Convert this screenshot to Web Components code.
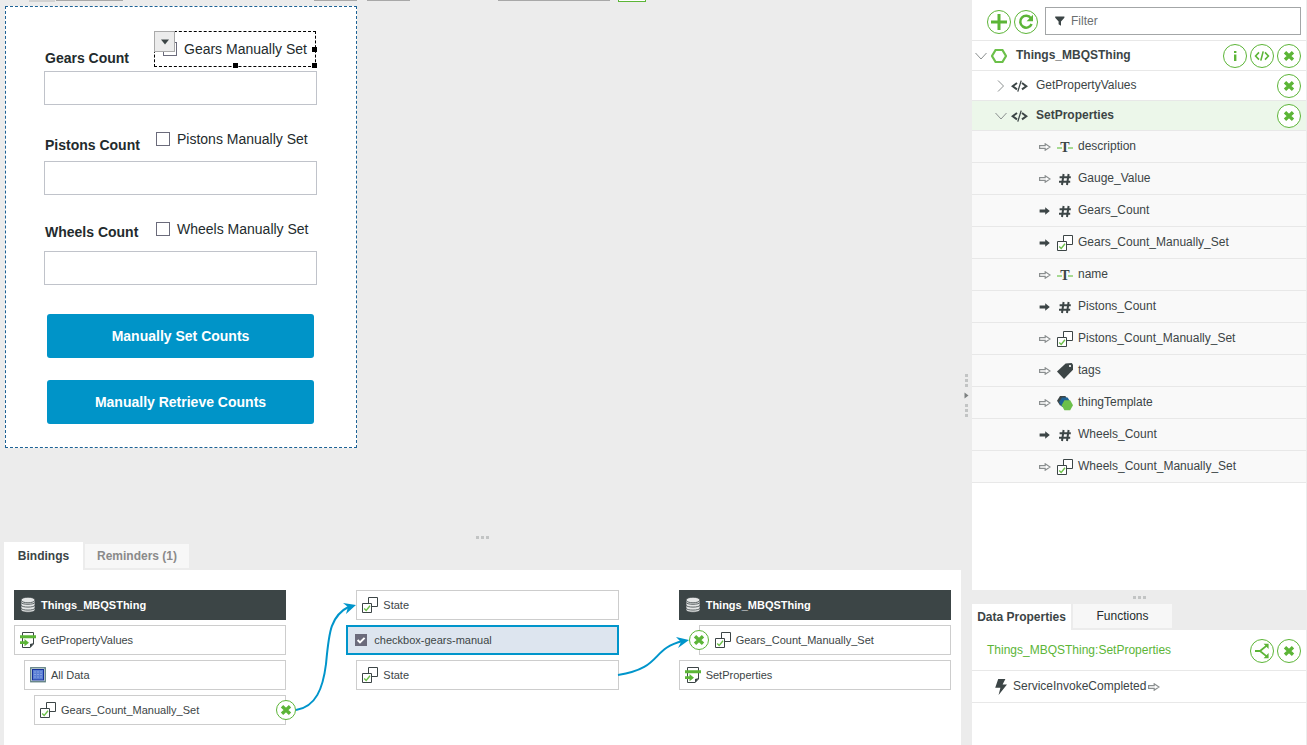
<!DOCTYPE html>
<html lang="en">
<head>
<meta charset="utf-8">
<title>Mashup Builder</title>
<style>
  html, body { margin: 0; background: #ececec; }
  body { font: 12px/16px "Liberation Sans", Arial, sans-serif; color: #3c4546; }
</style>
</head>
<body>
<builder-shell></builder-shell>

<script>
const G = '#5cb537', D = '#3c4546', B = '#0095cb';
const ICONS = {
  plus: [16, 16, `<path d="M8 0v16M0 8h16" stroke="${G}" stroke-width="3"/>`],
  refresh: [16, 16, `<path d="M12.9 4.2A5.9 5.9 0 1 0 13.6 10" fill="none" stroke="${G}" stroke-width="2.5"/><path d="M15 .8v6.4H8.6z" fill="${G}"/>`],
  close: [12, 12, `<path d="M2 2.200l8 7.600M10 2.200L2 9.800" stroke="${G}" stroke-width="3.400"/>`],
  info: [10, 12, `<path d="M4 1h2.400v2H4zM4 4.500h2.400v6.500H4z" fill="${G}"/>`],
  codegreen: [16, 12, `<path d="M5 2.400L1.600 6 5 9.600M11 2.400L14.400 6 11 9.600M9.200 1.400L6.800 10.600" fill="none" stroke="${G}" stroke-width="1.600"/>`],
  code: [17, 12, `<path d="M6 3L1.600 6.200 6 9.400M11 3l4.400 3.200L11 9.400" fill="none" stroke="${D}" stroke-width="2"/><path d="M10.200 .6L6.800 11.600" stroke="${D}" stroke-width="1.300"/>`],
  branch: [16, 16, `<path d="M1 8h5L13 2.400M6 8l7 5.600" fill="none" stroke="${G}" stroke-width="1.800"/><path d="M9.600.8H14.600V6zM9.600 15.200H14.600V10z" fill="${G}"/>`],
  funnel: [10, 10, `<path d="M.2.6h9.200v1.200L6 5.400v4.400L3.600 8.200V5.400L.2 1.800z" fill="${D}"/>`],
  hexagon: [16, 14, `<path d="M4.600 1h6.800L15 7l-3.600 6H4.600L1 7z" fill="none" stroke="#6cc04a" stroke-width="2.200"/>`],
  down: [12, 10, `<path d="M.5 2l5.500 6 5.500-6" fill="none" stroke="#8a8f8f"/>`],
  right: [12, 12, `<path d="M3 .5l5.500 5.500L3 11.500" fill="none" stroke="#8a8f8f"/>`],
  hollow: [12, 8, `<path d="M.6 2.600h5.600V.8L11 4 6.200 7.200V5.400H.6z" fill="#fff" stroke="#8a8e8f" stroke-width="1.200"/>`],
  solid: [12, 8, `<path d="M.6 2.500h5.600V.3L10.800 4 6.200 7.700V5.500H.6z" fill="${D}"/>`],
  string: [16, 16, `<path d="M0 9h5M11 9h5" stroke="#8cd070" stroke-width="1.500"/><text x="8" y="13" text-anchor="middle" font-family="Liberation Serif, serif" font-weight="700" font-size="14" fill="${D}">T</text>`],
  number: [16, 16, `<path d="M6.600 3L5 14M11.600 3L10 14M2.600 6.200h11.200M2 10.800h11.200" stroke="${D}" stroke-width="2"/>`],
  bool: [16, 16, `<path d="M6.500.5h9v9h-9z" fill="#fff" stroke="${D}"/><path d="M.5 6.500h9v9h-9z" fill="#fff" stroke="${D}"/><path d="M2.200 11.400l2 2L8 8.800" fill="none" stroke="#6cc04a" stroke-width="1.400"/>`],
  tag: [16, 16, `<path d="M8.600.6L14.600 0 16 1.400V6.800L7 16 0 8.600z" fill="${D}"/><circle cx="13" cy="3" r="1.100" fill="#fff"/>`],
  template: [16, 16, `<path d="M3 1h5.400l3 4.800-3 4.800H3L0 5.800z" fill="${D}"/><path d="M5 2.500h5.600l3 4.800-3 4.800H5L2 7.300z" fill="#1d6295"/><path d="M7.400 5.200h5.800l2.800 5-2.800 5H7.400l-2.800-5z" fill="#6cc04a"/>`],
  database: [16, 16, `<g fill="#e4e6e6" stroke="${D}" stroke-width=".8"><path d="M1 11v2c0 3 14 3 14 0v-2z"/><path d="M1 8v3c0 2.800 14 2.800 14 0V8z"/><path d="M1 5v3c0 2.800 14 2.800 14 0V5z"/><path d="M1 3v2.200c0 2.800 14 2.800 14 0V3z"/><ellipse cx="8" cy="3" rx="7" ry="2.800"/></g>`],
  service: [16, 16, `<path d="M2.500 5V.5h11V5M2.500 5v10.500h7.500l3.500-3.500V5z" fill="#fff" stroke="${D}"/><path d="M14 11l-4 5v-4z" fill="${D}"/><path d="M0 3.200h16v3H0zM0 9.200h4.500V7l4.500 3.700-4.500 3.600v-2.200H0z" fill="${G}"/>`],
  infotable: [16, 16, `<rect x=".75" y=".75" width="14.500" height="14" fill="#e4eeee" stroke="#5d7d80" stroke-width="1.300"/><rect x="2.500" y="2.500" width="11" height="10.500" fill="#5a7fd4" stroke="#16309c"/><path d="M4 5h8M4 7.500h8M4 10h8" stroke="#8da6e2" stroke-width=".9" stroke-dasharray="2 1"/>`],
  bolt: [12, 16, `<path d="M3.200 0h7.200L7.600 5.400H12L3.600 16l1.800-7.200H.2z" fill="${D}"/>`],
  caret: [10, 6, `<path d="M1 .5h8L5 5.500z" fill="${D}"/>`],
  grip: [5, 7, `<path d="M.5.500v6L4.500 3.500z" fill="#7c8080"/>`]
};

function define(name, css, html, setup) {
  customElements.define(name, class extends HTMLElement {
    constructor() {
      super();
      this.attachShadow({ mode: 'open' });
    }
    connectedCallback() {
      const markup = typeof html === 'function' ? html(this) : html;
      this.shadowRoot.innerHTML = `<style>*{box-sizing:border-box}${css}</style>${markup}`;
      if (setup) setup(this);
    }
  });
}

define('ui-icon', `:host{display:block;flex:none} svg{display:block}`, el => {
  const [w, h, body] = ICONS[el.getAttribute('name')];
  return `<svg width="${w}" height="${h}" viewBox="0 0 ${w} ${h}" aria-hidden="true">${body}</svg>`;
});

define('round-button', `
  :host{display:block;flex:none}
  button{display:flex;align-items:center;justify-content:center;width:var(--size,24px);height:var(--size,24px);
    padding:0;border:1px solid #5cb537;border-radius:50%;background:#fff;cursor:pointer}`,
  el => `<button type="button" aria-label="${el.getAttribute('label')}"><ui-icon name="${el.getAttribute('icon')}"></ui-icon></button>`);

define('dot-grip', `
  :host{display:flex;align-items:center;justify-content:center;gap:2px}
  :host([vertical]){flex-direction:column}
  i{width:3px;height:3px;background:#c2c4c4}`, `<i></i><i></i><i></i>`);

define('toolbar-edge', `
  :host{display:flex;align-items:flex-start;height:6px}
  i{height:1px;background:#a8a8a8}
  .tab{width:26px;height:2px;margin:0 1px 0 29px;background:#d2d2d2}
  .a{width:67px;margin-right:191px}.b{width:43px;margin-right:10px}.c{width:43px;margin-right:88px}
  .d{width:112px;margin-right:8px}
  .e{width:28px;height:2px;background:#fff;border:1px solid #5cb537;border-top:0}`,
  `<i class="tab"></i><i class="a"></i><i class="b"></i><i class="c"></i><i class="d"></i><i class="e"></i>`);

define('count-field', `
  :host{display:block}
  header{display:grid;grid-template-columns:109px 162px;height:36px;margin-bottom:4px}
  .name{align-self:end;margin-bottom:var(--rise,0);font:700 14px/18px "Liberation Sans",Arial,sans-serif;color:#232b2d}
  .check{position:relative;display:flex;align-items:center;gap:7px;padding-left:2px;font-size:14px;line-height:18px;
    color:#232b2d;white-space:nowrap}
  :host([selected]) .check{padding-left:8px;border:1px dashed #000}
  input[type=checkbox]{appearance:none;flex:none;width:14px;height:14px;margin:0;border:1px solid #6b6b7b;background:#fff}
  input[type=text]{display:block;width:273px;height:34px;margin:0 0 0 -1px;padding:0 8px;border:1px solid #c0c3ca;
    background:#fff;font:14px/18px "Liberation Sans",Arial,sans-serif;outline:0}
  .menu{position:absolute;left:-1px;top:-1px;display:flex;align-items:center;justify-content:center;width:21px;height:21px;
    padding:0;border:1px solid #aaa;background:#ececec}
  .handle{position:absolute;width:5px;height:5px;background:#000}
  .e{right:-2px;top:15px}.s{left:78px;bottom:-2px}.se{right:-2px;bottom:-2px}`,
  el => {
    const n = el.getAttribute('name');
    const tools = el.hasAttribute('selected')
      ? `<button type="button" class="menu" aria-label="Widget menu"><ui-icon name="caret"></ui-icon></button>
         <span class="handle e"></span><span class="handle s"></span><span class="handle se"></span>` : '';
    return `<header><label class="name" for="value">${n} Count</label>
      <div class="check"><input type="checkbox" id="manual"><label for="manual">${n} Manually Set</label>${tools}</div></header>
      <input type="text" id="value">`;
  });

define('action-button', `
  :host{display:block}
  button{display:block;width:100%;height:44px;padding:0;border:0;border-radius:3px;background:#0094c8;color:#fff;
    font:700 14px/18px "Liberation Sans",Arial,sans-serif;cursor:pointer}`,
  `<button type="button"><slot></slot></button>`);

define('mashup-canvas', `
  :host{display:block;width:352px;margin-left:5px;padding:24px 38px 23px;border:1px dashed #1d6295;background:#fff}
  .fields{display:flex;flex-direction:column;gap:16px;padding-left:1px}
  .actions{display:flex;flex-direction:column;gap:22px;width:267px;margin:29px 0 0 3px}
  .mid{--rise:3px}.high{--rise:6px}`,
  `<div class="fields">
    <count-field name="Gears" selected></count-field>
    <count-field name="Pistons" class="mid"></count-field>
    <count-field name="Wheels" class="high"></count-field>
  </div>
  <div class="actions">
    <action-button>Manually Set Counts</action-button>
    <action-button>Manually Retrieve Counts</action-button>
  </div>`);

define('tab-strip', `
  :host{display:flex;align-items:center;gap:2px}
  button{height:24px;padding:0;border:0;background:#f7f7f7;color:var(--idle,#232b2d);
    font:var(--idle-weight,400) 12px/16px "Liberation Sans",Arial,sans-serif;white-space:nowrap}
  .one{width:var(--first);height:var(--tab-height,28px);background:#fff;color:#3c4546;font-weight:700}
  .two{width:var(--second)}`,
  el => `<button type="button" role="tab" class="one" aria-selected="true">${el.getAttribute('first')}</button><button type="button" role="tab" class="two" aria-selected="false">${el.getAttribute('second')}</button>`);

define('binding-row', `
  :host{display:flex;align-items:center;gap:5px;position:relative;box-sizing:border-box;height:30px;padding:0 5px;
    border:1px solid #cdcdcd;background:#fff;font-size:11px;line-height:14px;white-space:nowrap}
  :host([kind=source]){border-color:#3c4546;background:#3c4546;color:#fff;font-weight:700}
  :host([kind=widget]){gap:7px;padding:0 7px;border:2px solid #0095cb;background:#dde5ef}
  :host([indent="1"]){margin-left:10px}
  :host([indent="2"]){margin-left:20px}
  :host([unlink=start]){padding-left:15px}
  round-button{--size:20px;position:absolute;top:4px}
  :host([unlink=start]) round-button{left:-11px}
  :host([unlink=end]) round-button{right:-11px}
  input{appearance:none;width:12px;height:12px;margin:0;background:#6b6b7b}
  .tick{display:grid;width:12px;height:12px}
  .tick>*{grid-area:1/1}
  .tick svg{pointer-events:none;z-index:1}`,
  el => {
    const lead = el.getAttribute('kind') === 'widget'
      ? `<span class="tick"><input type="checkbox" id="on" checked aria-label="Widget"><svg width="12" height="12" viewBox="0 0 12 12"><path d="M2.600 6l2.400 2.400L9.600 3.900" fill="none" stroke="#fff" stroke-width="2"/></svg></span>`
      : `<ui-icon name="${el.getAttribute('icon')}"></ui-icon>`;
    const x = el.hasAttribute('unlink') ? `<round-button icon="close" label="Remove binding"></round-button>` : '';
    return `${lead}<span><slot></slot></span>${x}`;
  });

define('binding-board', `
  :host{display:grid;grid-template-columns:repeat(3,minmax(0,1fr));gap:60px;box-sizing:border-box;min-height:175px;padding:20px 10px;background:#fff}
  section{display:flex;flex-direction:column;gap:5px;position:relative}
  .wire{position:absolute;pointer-events:none;overflow:visible;z-index:1}
  .in{left:-50px;top:0}
  .out{left:100%;top:0}
  path{fill:none;stroke:#0095cb;stroke-width:2}
  .tip{fill:#0095cb;stroke:none}`,
  `<section>
    <binding-row kind="source" icon="database">Things_MBQSThing</binding-row>
    <binding-row icon="service">GetPropertyValues</binding-row>
    <binding-row icon="infotable" indent="1">All Data</binding-row>
    <binding-row icon="bool" indent="2" unlink="end">Gears_Count_Manually_Set</binding-row>
  </section>
  <section>
    <svg class="wire in" width="60" height="125" viewBox="0 0 60 125"><path d="M0 120C20 117 27 98 30 74C33 42 34 26 54 16"/><path class="tip" d="M60 15L50 24L52 17L47 13z"/></svg>
    <binding-row icon="bool" indent="1">State</binding-row>
    <binding-row kind="widget">checkbox-gears-manual</binding-row>
    <binding-row icon="bool" indent="1">State</binding-row>
    <svg class="wire out" width="70" height="125" viewBox="0 0 70 125"><path d="M-1 85C44 78 31 59 64 51"/><path class="tip" d="M70 50L59 58L62 52L57 47z"/></svg>
  </section>
  <section>
    <binding-row kind="source" icon="database">Things_MBQSThing</binding-row>
    <binding-row icon="bool" indent="2" unlink="start">Gears_Count_Manually_Set</binding-row>
    <binding-row icon="service">SetProperties</binding-row>
  </section>`);

define('filter-bar', `
  :host{display:flex;align-items:center;gap:3px;box-sizing:border-box;height:41px;padding:1px 5px 0 15px;border-bottom:1px solid #e8e8e8;background:#fff}
  round-button{padding-top:2px}
  label{display:flex;align-items:center;gap:6px;flex:1;min-width:0;height:28px;margin-left:4px;padding-left:9px;border:1px solid #a3a6a7}
  input{flex:1;min-width:0;padding:0;border:0;outline:0;background:none;font:12px/16px "Liberation Sans",Arial,sans-serif}
  input::placeholder{color:#6a6f70;opacity:1}`,
  `<round-button icon="plus" label="Add entity"></round-button><round-button icon="refresh" label="Refresh"></round-button>
   <label><ui-icon name="funnel"></ui-icon><input type="text" placeholder="Filter" aria-label="Filter"></label>`);

define('tree-row', `
  :host{display:flex;align-items:center;box-sizing:border-box;height:30px;padding:0 5px 0 3px;border-bottom:1px solid #e8e8e8;white-space:nowrap}
  .text{flex:1;padding-bottom:1px}
  :host([bold]) .text{font-weight:700}
  .actions{display:flex;gap:3px;padding-top:1px}
  :host([level="0"]) .text{padding-left:9px}
  :host([level="0"]) .kind{margin-left:4px}
  :host([level="1"]){padding-left:23px}
  :host([level="1"]) .kind{margin-left:4px}
  :host([level="1"]) .text{padding-left:8px}
  :host([active]){background:#ecf7ea}
  :host([level="2"]){height:32px;padding-left:67px;background:#f9f9f9}
  :host([level="2"]) .kind{margin-left:6px}
  :host([level="2"]) .text{padding-left:5px}`,
  el => {
    const acts = (el.getAttribute('actions') || '').split(' ').filter(Boolean)
      .map(a => `<round-button icon="${a}" label="${a}"></round-button>`).join('');
    return `<ui-icon name="${el.getAttribute('lead')}"></ui-icon><ui-icon class="kind" name="${el.getAttribute('kind')}"></ui-icon>
      <span class="text"><slot></slot></span><span class="actions">${acts}</span>`;
  });

define('data-tree', `:host{display:block;background:#fff}`, () => {
  const leaves = [
    ['hollow', 'string', 'description'], ['hollow', 'number', 'Gauge_Value'], ['solid', 'number', 'Gears_Count'],
    ['solid', 'bool', 'Gears_Count_Manually_Set'], ['hollow', 'string', 'name'], ['solid', 'number', 'Pistons_Count'],
    ['hollow', 'bool', 'Pistons_Count_Manually_Set'], ['hollow', 'tag', 'tags'], ['hollow', 'template', 'thingTemplate'],
    ['solid', 'number', 'Wheels_Count'], ['hollow', 'bool', 'Wheels_Count_Manually_Set']
  ];
  return `<tree-row level="0" bold lead="down" kind="hexagon" actions="info codegreen close">Things_MBQSThing</tree-row>
    <tree-row level="1" lead="right" kind="code" actions="close">GetPropertyValues</tree-row>
    <tree-row level="1" bold active lead="down" kind="code" actions="close">SetProperties</tree-row>` +
    leaves.map(([a, k, t]) => `<tree-row level="2" lead="${a}" kind="${k}">${t}</tree-row>`).join('');
});

define('service-events', `
  :host{display:block;box-sizing:border-box;min-height:115px;background:#fff}
  .head{display:flex;align-items:center;gap:3px;height:41px;padding:0 5px 0 15px;border-bottom:1px solid #e8e8e8}
  round-button{padding-top:2px}
  a{flex:1;color:#5cb537;text-decoration:none;padding-bottom:1px}
  .event{display:flex;align-items:center;height:32px;padding-left:23px;border-bottom:1px solid #e8e8e8}
  .event span{margin:0 2px 0 6px;padding-bottom:1px}`,
  `<div class="head"><a href="#">Things_MBQSThing:SetProperties</a><round-button icon="branch" label="Show bindings"></round-button><round-button icon="close" label="Remove"></round-button></div>
   <div class="event"><ui-icon name="bolt"></ui-icon><span>ServiceInvokeCompleted</span><ui-icon name="hollow"></ui-icon></div>`);

define('builder-shell', `
  :host{display:grid;grid-template-columns:minmax(0,1fr) 11px 334px;min-height:100vh;padding-right:1px;background:#ececec;box-sizing:border-box}
  main,aside{display:flex;flex-direction:column;min-width:0}
  .workspace{flex:1}
  main dot-grip{height:10px;margin-left:4px}
  .bindings{margin-left:4px}
  .bindings tab-strip{--first:79px;--second:104px;--idle:#8a8a8a;--idle-weight:700}
  .gutter{display:flex;flex-direction:column;align-items:center;justify-content:center;gap:5px;padding-top:45px}
  .tree{flex:1;background:#fff}
  .edge{height:1px;margin-left:100px;background:#e8e8e8;margin-bottom:-1px}
  aside dot-grip{height:14px}
  aside tab-strip{align-items:flex-start;--first:99px;--second:99px;--tab-height:26px}`,
  `<main>
    <toolbar-edge></toolbar-edge>
    <div class="workspace"><mashup-canvas></mashup-canvas></div>
    <dot-grip></dot-grip>
    <div class="bindings"><tab-strip first="Bindings" second="Reminders (1)"></tab-strip><binding-board></binding-board></div>
  </main>
  <div class="gutter"><dot-grip vertical></dot-grip><ui-icon name="grip"></ui-icon><dot-grip vertical></dot-grip></div>
  <aside>
    <div class="tree"><div class="edge"></div><filter-bar></filter-bar><data-tree></data-tree></div>
    <dot-grip></dot-grip>
    <tab-strip first="Data Properties" second="Functions"></tab-strip>
    <service-events></service-events>
  </aside>`);
</script>
</body>
</html>
